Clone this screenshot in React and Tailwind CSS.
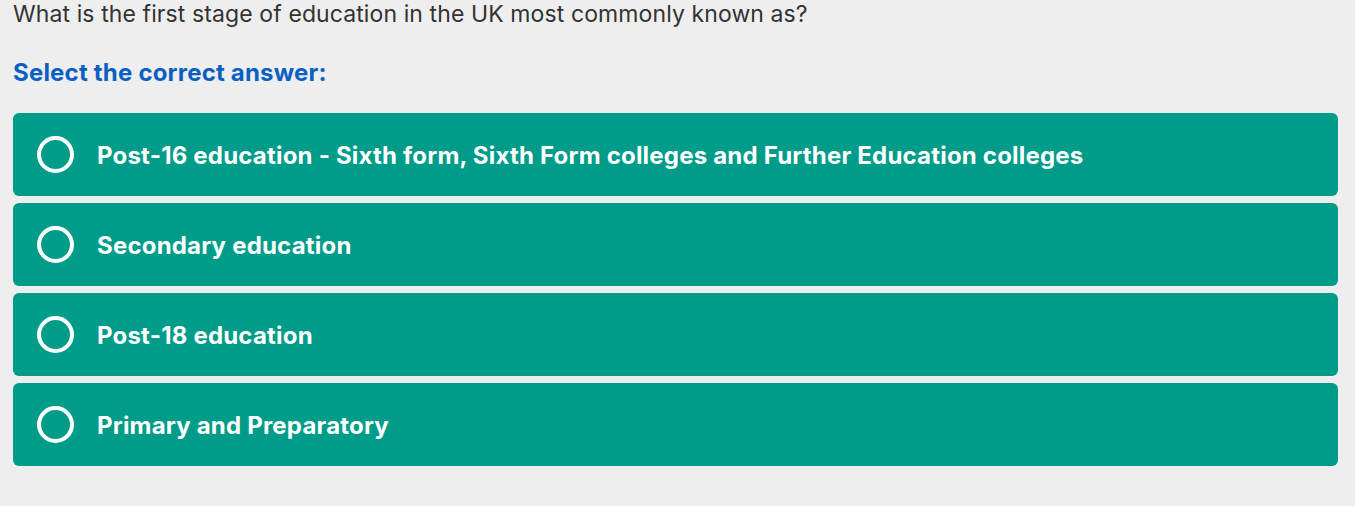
export default function App() {
  const options = [
    'Post-16 education - Sixth form, Sixth Form colleges and Further Education colleges',
    'Secondary education',
    'Post-18 education',
    'Primary and Preparatory',
  ]

  return (
    <div className="min-h-[506px] bg-[#eeeeee] px-[13px] pb-10" style={{ fontFamily: 'Inter, "Noto Sans", sans-serif' }}>
      <p className="-mt-[1px] text-[23px] leading-[30px] tracking-[0.1px] text-[#333333]">What is the first stage of education in the UK most commonly known as?</p>
      <h2 className="mt-[29px] text-[24px] leading-[30px] font-bold tracking-[0.2px] text-[#0a60c2]">Select the correct answer:</h2>
      <div className="mt-[25px] flex flex-col gap-[7px] pr-[4px]">
        {options.map((opt) => (
          <button key={opt} className="flex h-[83px] items-center rounded-[6px] bg-[#009c8a] text-left">
            <span className="ml-[24px] h-[37px] w-[37px] shrink-0 rounded-full border-[4px] border-white" />
            <span className="ml-[23px] pt-[2px] text-[24px] font-bold tracking-[0.2px] text-white">{opt}</span>
          </button>
        ))}
      </div>
    </div>
  )
}
